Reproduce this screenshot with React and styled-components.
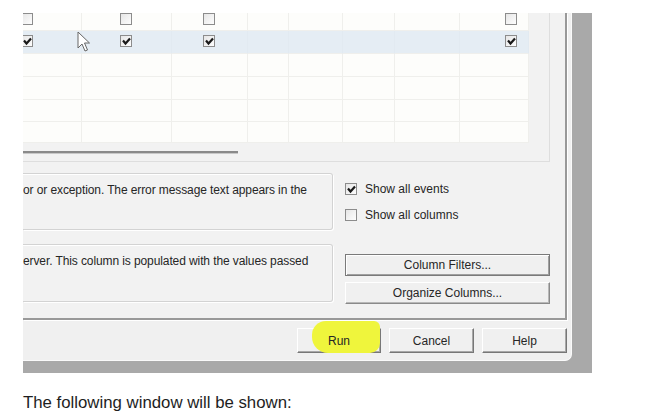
import React from 'react';
import styled, { createGlobalStyle } from 'styled-components';

const GlobalStyle = createGlobalStyle`
  html, body {
    margin: 0;
    padding: 0;
    background: #fff;
  }
  body {
    font-family: "Liberation Sans", Arial, sans-serif;
    color: #222;
  }
`;

// Grid layout data
const colWidths = [59, 90, 76, 41, 54, 52, 65, 69];
const checkPad = { 0: -2, 1: 38, 2: 31, 7: 45 };
const rows = [
  { h: 18, top: 0, checks: true, on: false },
  { h: 23, top: 4, checks: true, on: true, sel: true },
  { h: 23 },
  { h: 23 },
  { h: 22 },
  { h: 21 },
];

const Page = styled.div`
  width: 653px;
  height: 418px;
  overflow: hidden;
  box-sizing: border-box;
  padding: 13px 0 0 23px;
`;

const Shot = styled.div`
  width: 569px;
  height: 360px;
  box-sizing: border-box;
  padding: 0 20px 12px 0;
  background: #a9a9a9;
`;

const Dialog = styled.div`
  width: 549px;
  height: 348px;
  box-sizing: border-box;
  background: #f0f0f0;
  border-right: 1px solid #fafafa;
  border-bottom: 1px solid #fafafa;
  border-bottom-right-radius: 7px;
  display: flex;
  flex-direction: column;
`;

const Panel = styled.div`
  width: 544px;
  height: 307px;
  box-sizing: border-box;
  border-right: 2px solid #999;
  border-bottom: 2px solid #999;
  box-shadow: 1px 1px 0 #fff;
  background: #f2f2f2;
  display: flex;
  flex-direction: column;
`;

const GridFrame = styled.div`
  width: 527px;
  height: 149px;
  box-sizing: border-box;
  border-right: 1px solid #dedede;
  border-bottom: 1px solid #dedede;
  display: grid;
  grid-template-columns: 506px 1fr;
  grid-template-rows: 130px 1fr;
`;

const Table = styled.div`
  background: #fdfdfb;
  display: grid;
  grid-template-columns: ${colWidths.map((w) => `${w}px`).join(' ')};
  grid-template-rows: ${rows.map((r) => `${r.h}px`).join(' ')};
  overflow: hidden;
`;

const Cell = styled.div`
  position: relative;
  box-sizing: border-box;
  border-right: 1px solid ${(p) => (p.$sel ? '#e2eaf1' : '#efefec')};
  border-bottom: 1px solid #efefec;
  background: ${(p) => (p.$sel ? '#e5edf4' : 'transparent')};
  padding-left: ${(p) => Math.max(p.$pad, 0)}px;
  padding-top: ${(p) => p.$top}px;
  overflow: hidden;
`;

const Check = styled.span`
  display: block;
  flex: none;
  width: 12px;
  height: 12px;
  box-sizing: border-box;
  margin-left: ${(p) => Math.min(p.$pad || 0, 0)}px;
  border: 1px solid #8c8c8c;
  background: linear-gradient(135deg, #e6e6e6, #fdfdfd);
  position: relative;

  svg {
    position: absolute;
    left: 0;
    top: 0;
  }
`;

const VScroll = styled.div`
  grid-row: 1 / 3;
  grid-column: 2;
  background: #f2f2f2;
`;

const HScroll = styled.div`
  background: #f2f2f2;
  padding-top: 8px;
`;

const Thumb = styled.div`
  width: 215px;
  height: 2px;
  background: #8a8a8a;
  box-shadow: 0 1px 0 #c8c8c8;
`;

const Lower = styled.div`
  display: flex;
  margin-top: 11px;
`;

const Groups = styled.div`
  width: 310px;
  display: flex;
  flex-direction: column;
  gap: 14px;
`;

const GroupBox = styled.div`
  height: ${(p) => p.$h}px;
  box-sizing: border-box;
  border: 1px solid #d3d3d3;
  border-left: none;
  border-radius: 0 3px 3px 0;
  box-shadow: inset 0 1px 0 #fff, 1px 1px 0 #fff;
  padding-top: 9px;
  font-size: 12px;
  line-height: 14px;
  letter-spacing: -0.1px;
  white-space: nowrap;
  overflow: hidden;
  color: #262626;
`;

const Side = styled.div`
  margin-left: 12px;
  width: 205px;
  padding-top: 9px;
  display: flex;
  flex-direction: column;
`;

const Option = styled.label`
  display: flex;
  align-items: center;
  gap: 8px;
  height: 13px;
  font-size: 12px;
  color: #262626;
  margin-bottom: 13px;
`;

const SideButton = styled.div`
  height: 22px;
  box-sizing: border-box;
  margin-top: ${(p) => p.$mt}px;
  background: #f0f0f0;
  border: 1px solid;
  border-color: ${(p) => (p.$focus ? '#7a7a7a' : '#fff #8a8a8a #8a8a8a #fff')};
  box-shadow: ${(p) =>
    p.$focus ? 'inset 1px 1px 0 #fff, inset -1px -1px 0 #a0a0a0' : 'inset -1px -1px 0 #b8b8b8'};
  display: flex;
  align-items: center;
  justify-content: center;
  font-size: 12px;
  color: #262626;
`;

const ButtonRow = styled.div`
  display: flex;
  justify-content: flex-end;
  gap: 8px;
  padding: 8px 4px 0 0;
`;

const DlgButton = styled.div`
  position: relative;
  width: ${(p) => p.$w}px;
  height: 25px;
  box-sizing: border-box;
  background: #f0f0f0;
  border: 1px solid;
  border-color: #fff #777 #777 #fff;
  box-shadow: inset -1px -1px 0 #a8a8a8;
  display: flex;
  align-items: center;
  justify-content: center;
  font-size: 12px;
  color: #262626;
`;

const Highlight = styled.span`
  position: absolute;
  left: 14px;
  top: -8px;
  width: 68px;
  height: 32px;
  background: #eff53c;
  border-radius: 14px 6px 10px 16px;
  filter: blur(0.6px);
`;

const Label = styled.span`
  position: relative;
`;

const Cursor = styled.svg`
  position: absolute;
  left: 54px;
  top: 18px;
`;

const TableWrap = styled.div`
  position: relative;
`;

const Caption = styled.p`
  margin: 20px 0 0;
  font-size: 16.8px;
  line-height: 20px;
  color: #1e1e1e;
`;

const Tick = () => (
  <svg width="11" height="11" viewBox="0 0 11 11">
    <path d="M2 4.5 L4.5 7.5 L9 2.5" stroke="#1a1a1a" strokeWidth="2.2" fill="none" />
  </svg>
);

const Box = ({ on, pad }) => <Check $pad={pad}>{on && <Tick />}</Check>;

const Arrow = () => (
  <Cursor width="14" height="22" viewBox="0 0 14 22">
    <path
      d="M1 1 L1 17 L5 13 L8 20 L10.5 19 L7.5 12 L12.5 12 Z"
      fill="#fff"
      stroke="#666"
      strokeWidth="1"
      strokeLinejoin="round"
    />
  </Cursor>
);

const App = () => (
  <>
    <GlobalStyle />
    <Page>
      <Shot>
        <Dialog>
          <Panel>
            <GridFrame>
              <TableWrap>
                <Table>
                  {rows.map((r, ri) =>
                    colWidths.map((w, ci) => {
                      const has = r.checks && checkPad[ci] !== undefined;
                      return (
                        <Cell
                          key={`${ri}-${ci}`}
                          $sel={r.sel}
                          $pad={has ? checkPad[ci] : 0}
                          $top={r.top || 0}
                        >
                          {has && <Box on={r.on} pad={checkPad[ci]} />}
                        </Cell>
                      );
                    })
                  )}
                </Table>
                <Arrow />
              </TableWrap>
              <VScroll />
              <HScroll>
                <Thumb />
              </HScroll>
            </GridFrame>
            <Lower>
              <Groups>
                <GroupBox $h={57}>or or exception. The error message text appears in the</GroupBox>
                <GroupBox $h={58}>erver. This column is populated with the values passed</GroupBox>
              </Groups>
              <Side>
                <Option>
                  <Box on />
                  Show all events
                </Option>
                <Option>
                  <Box />
                  Show all columns
                </Option>
                <SideButton $mt={20} $focus>Column Filters...</SideButton>
                <SideButton $mt={6}>Organize Columns...</SideButton>
              </Side>
            </Lower>
          </Panel>
          <ButtonRow>
            <DlgButton $w={84}>
              <Highlight />
              <Label>Run</Label>
            </DlgButton>
            <DlgButton $w={85}>Cancel</DlgButton>
            <DlgButton $w={85}>Help</DlgButton>
          </ButtonRow>
        </Dialog>
      </Shot>
      <Caption>The following window will be shown:</Caption>
    </Page>
  </>
);

export default App;
